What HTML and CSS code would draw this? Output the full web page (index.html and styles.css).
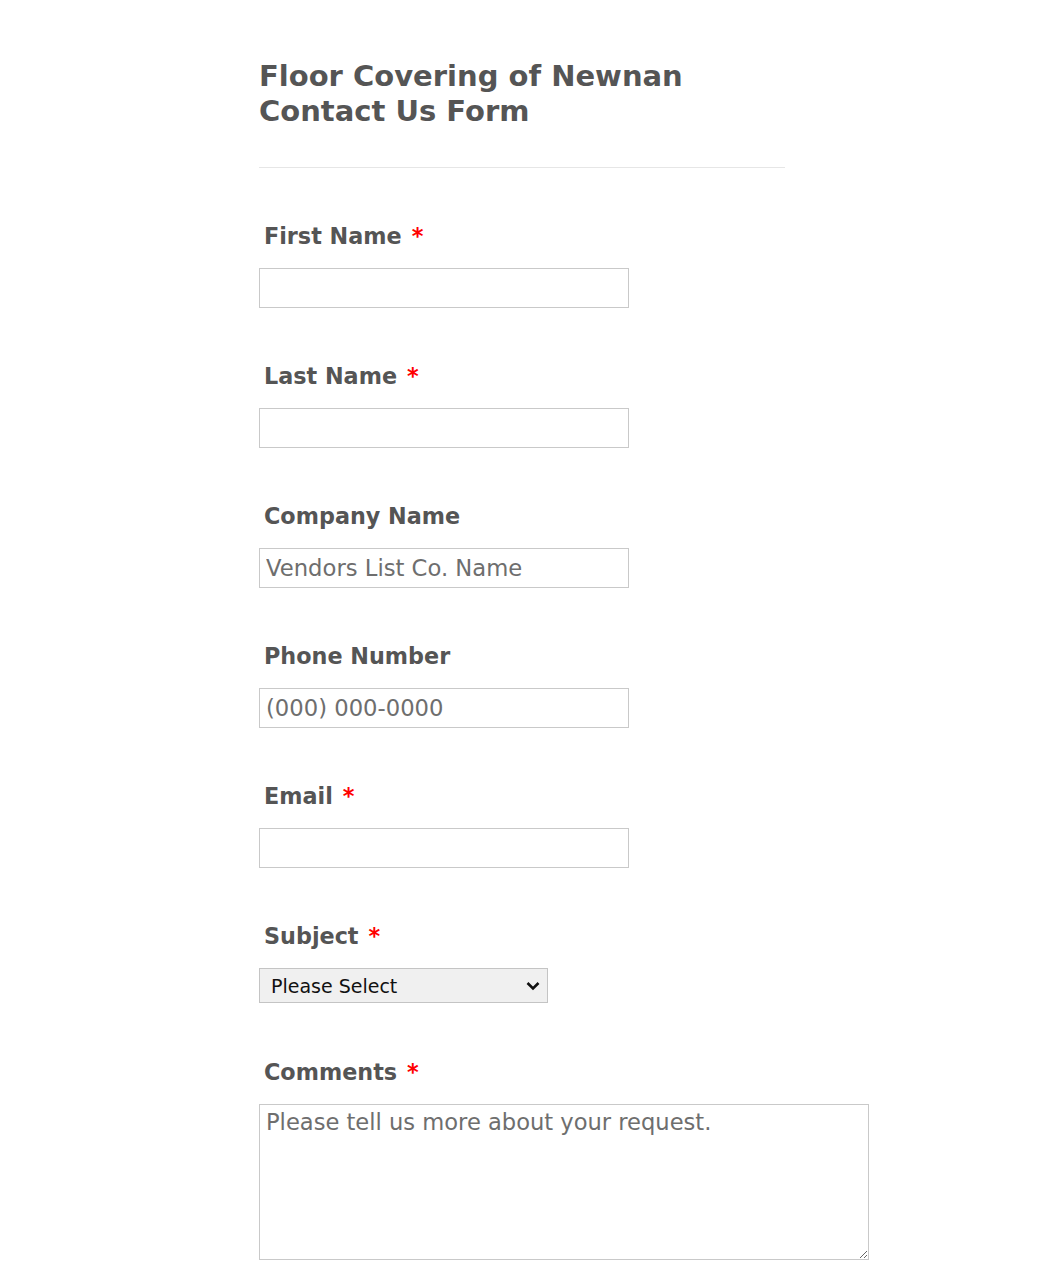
FILE: index.html
```html
<!DOCTYPE html>
<html>
<head>
<meta charset="utf-8">
<title>Contact Us Form</title>
<link rel="stylesheet" href="styles.css">
</head>
<body>
<form class="form">
  <h1 class="title">Floor Covering of Newnan<br>Contact Us Form</h1>
  <div class="divider"></div>
  <div class="field">
    <label class="label">First Name<span class="req">*</span></label>
    <input class="input" type="text">
  </div>
  <div class="field">
    <label class="label">Last Name<span class="req">*</span></label>
    <input class="input" type="text">
  </div>
  <div class="field">
    <label class="label">Company Name</label>
    <input class="input" type="text" placeholder="Vendors List Co. Name">
  </div>
  <div class="field">
    <label class="label">Phone Number</label>
    <input class="input" type="text" placeholder="(000) 000-0000">
  </div>
  <div class="field">
    <label class="label">Email<span class="req">*</span></label>
    <input class="input" type="text">
  </div>
  <div class="field field-select">
    <label class="label">Subject<span class="req">*</span></label>
    <div class="select">
      <span class="select-text">Please Select</span>
      <svg class="chevron" width="14" height="10" viewBox="0 0 14 10"><path d="M1.5 2 L7 7.5 L12.5 2" fill="none" stroke="#111" stroke-width="2.6"/></svg>
    </div>
  </div>
  <div class="field">
    <label class="label">Comments<span class="req">*</span></label>
    <div class="textarea-wrap">
      <textarea class="textarea" placeholder="Please tell us more about your request."></textarea>
    </div>
  </div>
</form>
</body>
</html>
```
FILE: styles.css
```css
html, body {
  margin: 0;
  padding: 0;
  background: #fff;
}
body {
  font-family: "DejaVu Sans", Verdana, sans-serif;
  color: #555;
}
.form {
  width: 526px;
  margin: 0 auto;
  padding-top: 59px;
}
.title {
  margin: 0;
  font-size: 29px;
  line-height: 35px;
  font-weight: bold;
  color: #555;
}
.divider {
  margin-top: 38px;
  height: 1px;
  background: #e6e6e6;
}
.field {
  display: flex;
  flex-direction: column;
  align-items: flex-start;
  padding-top: 55px;
}
.field + .field {
  padding-top: 55px;
}
.field-select + .field {
  padding-top: 56px;
}
.label {
  display: block;
  padding-left: 5px;
  font-size: 22.3px;
  line-height: 26px;
  font-weight: bold;
  color: #555;
  margin-bottom: 19px;
}
.req {
  color: #f00;
  margin-left: 10px;
}
.input {
  box-sizing: border-box;
  width: 370px;
  height: 40px;
  margin: 0;
  border: 1px solid #c9c9c9;
  padding: 0 6px;
  font-family: "DejaVu Sans", Verdana, sans-serif;
  font-size: 22.7px;
  color: #555;
  background: #fff;
  outline: none;
}
.input::placeholder, .textarea::placeholder {
  color: #6e6e6e;
}
.select {
  box-sizing: border-box;
  width: 289px;
  height: 35px;
  border: 1px solid #c4c4c4;
  background: #f0f0f0;
  display: flex;
  align-items: center;
  justify-content: space-between;
  padding: 0 7px 0 11px;
  color: #111;
  font-size: 19px;
}
.textarea-wrap {
  width: 610px;
}
.textarea {
  box-sizing: border-box;
  display: block;
  width: 610px;
  height: 156px;
  margin: 0;
  border: 1px solid #c9c9c9;
  padding: 3px 6px;
  font-family: "DejaVu Sans", Verdana, sans-serif;
  font-size: 22.6px;
  line-height: 28px;
  resize: vertical;
  outline: none;
}
```
